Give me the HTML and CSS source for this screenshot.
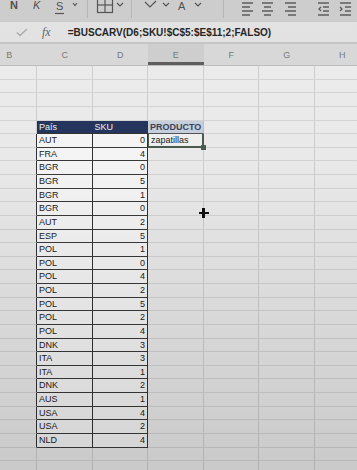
FILE: index.html
```html
<!DOCTYPE html>
<html lang="es">
<head>
<meta charset="utf-8">
<title>BUSCARV</title>
<link rel="stylesheet" href="styles.css">
</head>
<body>
<div class="app">
  <div class="toolbar">
    <svg width="357" height="22" viewBox="0 0 357 22">
      <g fill="#505050" font-family="Liberation Sans, Arial, sans-serif">
        <text x="10" y="9" font-size="11" font-weight="bold">N</text>
        <text x="33" y="9" font-size="11" font-style="italic">K</text>
        <text x="56" y="10" font-size="11">S</text>
        <text x="178" y="10" font-size="11">A</text>
      </g>
      <g stroke="#555" stroke-width="1.2" fill="none">
        <line x1="55" y1="13.5" x2="64" y2="13.5"/>
        <polyline points="73,3 75,5.5 77,3"/>
        <rect x="97.5" y="-2.5" width="15" height="15"/>
        <line x1="97.5" y1="5" x2="112.5" y2="5"/>
        <line x1="105" y1="-2" x2="105" y2="12.5"/>
        <polyline points="117,3 120,6 123,3"/>
        <path d="M145,2 L150,7 L156,1"/>
        <polyline points="163,3 166,6 169,3"/>
        <polyline points="195,3 198,6 201,3"/>
        <g stroke-width="1.4">
          <line x1="242" y1="3" x2="253" y2="3"/><line x1="242" y1="7" x2="250" y2="7"/><line x1="242" y1="11" x2="253" y2="11"/><line x1="242" y1="15" x2="250" y2="15"/>
          <line x1="262" y1="3" x2="273" y2="3"/><line x1="264" y1="7" x2="271" y2="7"/><line x1="262" y1="11" x2="273" y2="11"/><line x1="264" y1="15" x2="271" y2="15"/>
          <line x1="285" y1="3" x2="296" y2="3"/><line x1="288" y1="7" x2="296" y2="7"/><line x1="285" y1="11" x2="296" y2="11"/><line x1="288" y1="15" x2="296" y2="15"/>
          <line x1="318" y1="3" x2="329" y2="3"/><line x1="323" y1="7" x2="329" y2="7"/><line x1="323" y1="11" x2="329" y2="11"/><line x1="318" y1="15" x2="329" y2="15"/>
          <line x1="340" y1="3" x2="351" y2="3"/><line x1="345" y1="7" x2="351" y2="7"/><line x1="345" y1="11" x2="351" y2="11"/><line x1="340" y1="15" x2="351" y2="15"/>
        </g>
        <polyline points="321,7 319,9 321,11"/>
        <polyline points="340,7 342,9 340,11"/>
      </g>
      <g stroke="#b5b5b5" stroke-width="1">
        <line x1="87.5" y1="0" x2="87.5" y2="18"/>
        <line x1="131.5" y1="0" x2="131.5" y2="18"/>
        <line x1="223.5" y1="0" x2="223.5" y2="18"/>
      </g>
    </svg>
  </div>

  <div class="formula">
    <svg class="check" width="12" height="9" viewBox="0 0 12 9"><polyline points="1,4.5 4,7.5 11,1" fill="none" stroke="#a8a8a8" stroke-width="1.3"/></svg>
    <span class="fx">fx</span>
    <span class="ftext">=BUSCARV(D6;SKU!$C$5:$E$11;2;FALSO)</span>
  </div>

  <div class="sheet">
    <div class="colhead">
      <div class="ch">B</div><div class="ch">C</div><div class="ch">D</div><div class="ch sel">E</div><div class="ch">F</div><div class="ch">G</div><div class="ch">H</div>
    </div>
    <div class="grid">
      <div class="row"><div class="c"></div><div class="c"></div><div class="c"></div><div class="c"></div><div class="c"></div><div class="c"></div><div class="c"></div></div>
      <div class="row"><div class="c"></div><div class="c"></div><div class="c"></div><div class="c"></div><div class="c"></div><div class="c"></div><div class="c"></div></div>
      <div class="row"><div class="c"></div><div class="c"></div><div class="c"></div><div class="c"></div><div class="c"></div><div class="c"></div><div class="c"></div></div>
      <div class="row"><div class="c"></div><div class="c"></div><div class="c"></div><div class="c"></div><div class="c"></div><div class="c"></div><div class="c"></div></div>
      <div class="row"><div class="c"></div><div class="c hd">País</div><div class="c hd">SKU</div><div class="c hp">PRODUCTO</div><div class="c"></div><div class="c"></div><div class="c"></div></div>
      <div class="row"><div class="c bl"></div><div class="c t">AUT</div><div class="c t n">0</div><div class="c active">zapatillas</div><div class="c"></div><div class="c"></div><div class="c"></div></div>
      <div class="row"><div class="c bl"></div><div class="c t">FRA</div><div class="c t n">4</div><div class="c"></div><div class="c"></div><div class="c"></div><div class="c"></div></div>
      <div class="row"><div class="c bl"></div><div class="c t">BGR</div><div class="c t n">0</div><div class="c"></div><div class="c"></div><div class="c"></div><div class="c"></div></div>
      <div class="row"><div class="c bl"></div><div class="c t">BGR</div><div class="c t n">5</div><div class="c"></div><div class="c"></div><div class="c"></div><div class="c"></div></div>
      <div class="row"><div class="c bl"></div><div class="c t">BGR</div><div class="c t n">1</div><div class="c"></div><div class="c"></div><div class="c"></div><div class="c"></div></div>
      <div class="row"><div class="c bl"></div><div class="c t">BGR</div><div class="c t n">0</div><div class="c"></div><div class="c"></div><div class="c"></div><div class="c"></div></div>
      <div class="row"><div class="c bl"></div><div class="c t">AUT</div><div class="c t n">2</div><div class="c"></div><div class="c"></div><div class="c"></div><div class="c"></div></div>
      <div class="row"><div class="c bl"></div><div class="c t">ESP</div><div class="c t n">5</div><div class="c"></div><div class="c"></div><div class="c"></div><div class="c"></div></div>
      <div class="row"><div class="c bl"></div><div class="c t">POL</div><div class="c t n">1</div><div class="c"></div><div class="c"></div><div class="c"></div><div class="c"></div></div>
      <div class="row"><div class="c bl"></div><div class="c t">POL</div><div class="c t n">0</div><div class="c"></div><div class="c"></div><div class="c"></div><div class="c"></div></div>
      <div class="row"><div class="c bl"></div><div class="c t">POL</div><div class="c t n">4</div><div class="c"></div><div class="c"></div><div class="c"></div><div class="c"></div></div>
      <div class="row"><div class="c bl"></div><div class="c t">POL</div><div class="c t n">2</div><div class="c"></div><div class="c"></div><div class="c"></div><div class="c"></div></div>
      <div class="row"><div class="c bl"></div><div class="c t">POL</div><div class="c t n">5</div><div class="c"></div><div class="c"></div><div class="c"></div><div class="c"></div></div>
      <div class="row"><div class="c bl"></div><div class="c t">POL</div><div class="c t n">2</div><div class="c"></div><div class="c"></div><div class="c"></div><div class="c"></div></div>
      <div class="row"><div class="c bl"></div><div class="c t">POL</div><div class="c t n">4</div><div class="c"></div><div class="c"></div><div class="c"></div><div class="c"></div></div>
      <div class="row"><div class="c bl"></div><div class="c t">DNK</div><div class="c t n">3</div><div class="c"></div><div class="c"></div><div class="c"></div><div class="c"></div></div>
      <div class="row"><div class="c bl"></div><div class="c t">ITA</div><div class="c t n">3</div><div class="c"></div><div class="c"></div><div class="c"></div><div class="c"></div></div>
      <div class="row"><div class="c bl"></div><div class="c t">ITA</div><div class="c t n">1</div><div class="c"></div><div class="c"></div><div class="c"></div><div class="c"></div></div>
      <div class="row"><div class="c bl"></div><div class="c t">DNK</div><div class="c t n">2</div><div class="c"></div><div class="c"></div><div class="c"></div><div class="c"></div></div>
      <div class="row"><div class="c bl"></div><div class="c t">AUS</div><div class="c t n">1</div><div class="c"></div><div class="c"></div><div class="c"></div><div class="c"></div></div>
      <div class="row"><div class="c bl"></div><div class="c t">USA</div><div class="c t n">4</div><div class="c"></div><div class="c"></div><div class="c"></div><div class="c"></div></div>
      <div class="row"><div class="c bl"></div><div class="c t">USA</div><div class="c t n">2</div><div class="c"></div><div class="c"></div><div class="c"></div><div class="c"></div></div>
      <div class="row"><div class="c bl"></div><div class="c t">NLD</div><div class="c t n">4</div><div class="c"></div><div class="c"></div><div class="c"></div><div class="c"></div></div>
      <div class="row"><div class="c"></div><div class="c"></div><div class="c"></div><div class="c"></div><div class="c"></div><div class="c"></div><div class="c"></div></div>
      <div class="row"><div class="c"></div><div class="c"></div><div class="c"></div><div class="c"></div><div class="c"></div><div class="c"></div><div class="c"></div></div>
    </div>
    <div class="cursor"></div>
  </div>
  <div class="shade"></div>
</div>
</body>
</html>
```

FILE: styles.css
```css
html, body {
  margin: 0;
  padding: 0;
}
body {
  width: 357px;
  height: 470px;
  overflow: hidden;
  background: #e8e8e8;
  font-family: "Liberation Sans", Arial, sans-serif;
}
.app {
  position: relative;
  width: 357px;
  height: 470px;
  overflow: hidden;
}
.toolbar {
  height: 22px;
  background: #cdcdcd;
  overflow: hidden;
}
.toolbar svg {
  display: block;
}
.formula {
  height: 20px;
  background: #e3e3e3;
  border-bottom: 2px solid #c6c6c6;
  display: flex;
  align-items: center;
}
.check {
  margin-left: 16px;
  display: block;
}
.fx {
  margin-left: 14px;
  font-family: "Liberation Serif", "Times New Roman", serif;
  font-style: italic;
  font-size: 12px;
  color: #666;
}
.ftext {
  margin-left: 17px;
  font-size: 10px;
  font-weight: bold;
  color: #262626;
}
.sheet {
  position: relative;
  margin-left: -18.5px;
}
.colhead {
  display: flex;
  height: 22px;
  background: #d9d9d9;
  border-bottom: 1px solid #bdbdbd;
  box-sizing: border-box;
}
.ch {
  width: 55.5px;
  flex: none;
  display: flex;
  align-items: center;
  justify-content: center;
  font-size: 9px;
  color: #7a7a7a;
  box-sizing: border-box;
}
.ch.sel {
  background: #cfcfcf;
  border-bottom: 3px solid #5f5f5f;
  padding-top: 3px;
}
.row {
  display: flex;
  height: 13.64px;
}
.c {
  width: 55.5px;
  flex: none;
  box-sizing: border-box;
  border-right: 1px solid #d0d0d0;
  border-bottom: 1px solid #d6d6d6;
  background: #ededed;
  font-size: 9px;
  line-height: 12.6px;
  padding: 0 2px;
  white-space: nowrap;
  overflow: visible;
  color: #222;
}
.c.bl {
  border-right-color: #333;
}
.c.t {
  background: #f8f8f8;
  border-right-color: #333;
  border-bottom-color: #3a3a3a;
}
.c.n {
  text-align: right;
}
.c.hd {
  background: #25365e;
  color: #f4f4f4;
  border-right-color: #25365e;
  border-bottom-color: #333;
}
.c.hp {
  background: #c8d1e0;
  color: #3b4456;
  font-weight: bold;
  border-right-color: #b9c2d1;
  border-bottom-color: #555;
}
.c.active {
  position: relative;
  background: #f2f2f2;
  border: 1px solid #4c5c4f;
  border-top: 0;
  border-bottom-width: 2px;
  border-right-width: 2px;
  color: #222;
}
.c.active::after {
  content: "";
  position: absolute;
  right: -4px;
  bottom: -4px;
  width: 5px;
  height: 5px;
  background: #4c5c4f;
}
.cursor {
  position: absolute;
  left: 217px;
  top: 164px;
  width: 10px;
  height: 10px;
}
.cursor::before, .cursor::after {
  content: "";
  position: absolute;
  background: #111;
}
.cursor::before {
  left: 0;
  top: 4px;
  width: 10px;
  height: 2.4px;
}
.cursor::after {
  left: 3.8px;
  top: 0;
  width: 2.4px;
  height: 10px;
}
.shade {
  position: absolute;
  inset: 0;
  pointer-events: none;
  background: linear-gradient(to bottom, rgba(0,0,0,0) 0%, rgba(0,0,0,0.02) 35%, rgba(0,0,0,0.1) 75%, rgba(0,0,0,0.15) 100%);
}
```
